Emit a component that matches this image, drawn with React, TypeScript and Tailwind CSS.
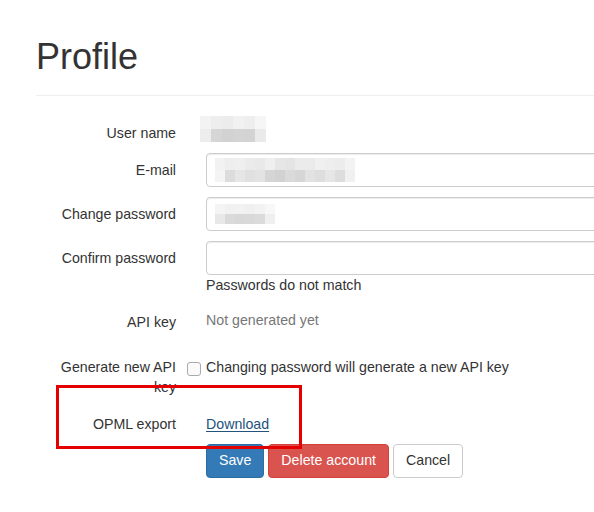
import React from 'react';

const font = { fontFamily: '"Liberation Sans", Arial, sans-serif' };

// pixelated placeholder for blurred data
const Mosaic: React.FC<{ top: string[]; bottom: string[]; cell: number; h: number }> = ({ top, bottom, cell, h }) => (
    <div className="flex flex-col">
        <div className="flex">
            {top.map((c, i) => (
                <div key={i} style={{ width: cell, height: h, background: c }} />
            ))}
        </div>
        <div className="flex">
            {bottom.map((c, i) => (
                <div key={i} style={{ width: cell, height: h, background: c }} />
            ))}
        </div>
    </div>
);

const Label: React.FC<{ children: React.ReactNode }> = ({ children }) => (
    <div className="ml-[10px] w-[130px] shrink-0 pt-[7px] text-right leading-5 text-[#333]">{children}</div>
);

const Input: React.FC<{ children?: React.ReactNode }> = ({ children }) => (
    <div className="flex h-[34px] w-[420px] shrink-0 items-center rounded-[4px] border border-[#ccc] bg-white pl-[8px] shadow-[inset_0_1px_1px_rgba(0,0,0,0.075)]">
        {children}
    </div>
);

export default function App() {
    return (
        <div className="relative h-[512px] w-[594px] overflow-hidden bg-white text-[14.2px] text-[#333]" style={font}>
            <div className="pl-[36px] pt-[37px]">
                <h1 className="border-b border-[#eee] pb-[18px] text-[36px] leading-[40px] font-normal text-[#333]">Profile</h1>

                <div className="mt-[20px] flex gap-[30px]">
                    <Label>User name</Label>
                    <div className="-ml-[6px]">
                        <Mosaic
                            cell={11}
                            h={13}
                            top={['#f3f3f3', '#eeeeee', '#ececec', '#f1f1f1', '#eeeeee', '#f6f6f6']}
                            bottom={['#ededed', '#d6d6d6', '#d2d2d2', '#d4d4d4', '#d3d3d3', '#eaeaea']}
                        />
                    </div>
                </div>

                <div className="mt-[10px] flex gap-[30px]">
                    <Label>E-mail</Label>
                    <Input>
                        <Mosaic
                            cell={10}
                            h={12}
                            top={['#f2f2f2', '#eeeeee', '#efefef', '#ebebeb', '#e9e9e9', '#efefef', '#e6e6e6', '#e4e4e4', '#ebebeb', '#eaeaea', '#f0f0f0', '#eeeeee', '#ececec', '#f3f3f3']}
                            bottom={['#f4f4f4', '#dcdcdc', '#e6e6e6', '#e0e0e0', '#e3e3e3', '#d5d5d5', '#d2d2d2', '#dadada', '#d6d6d6', '#e2e2e2', '#dedede', '#e6e6e6', '#dddddd', '#f0f0f0']}
                        />
                    </Input>
                </div>

                <div className="mt-[10px] flex gap-[30px]">
                    <Label>Change password</Label>
                    <Input>
                        <Mosaic
                            cell={10}
                            h={10}
                            top={['#f4f4f4', '#f1f1f1', '#f2f2f2', '#f0f0f0', '#f3f3f3', '#f7f7f7']}
                            bottom={['#e8e8e8', '#dadada', '#d8d8d8', '#d9d9d9', '#dbdbdb', '#efefef']}
                        />
                    </Input>
                </div>

                <div className="mt-[10px] flex gap-[30px]">
                    <Label>Confirm password</Label>
                    <div className="shrink-0">
                        <Input />
                        <div className="leading-5 text-[#333]">Passwords do not match</div>
                    </div>
                </div>

                <div className="mt-[10px] flex gap-[30px]">
                    <Label>API key</Label>
                    <div className="pt-[5px] leading-5 text-[#777]">Not generated yet</div>
                </div>

                <div className="mt-[18px] flex gap-[30px]">
                    <Label>Generate new API key</Label>
                    <div className="relative pt-[7px] leading-5">
                        <span className="absolute -left-[19px] top-[12px] h-[14px] w-[14px] rounded-[3px] border border-[#aaa] bg-[#fafafa]" />
                        Changing password will generate a new API key
                    </div>
                </div>

                <div className="mt-[10px] flex gap-[30px]">
                    <Label>OPML export</Label>
                    <div className="pt-[7px] leading-5">
                        <a href="#" className="text-[#23527c] underline underline-offset-2">Download</a>
                    </div>
                </div>

                <div className="mt-[10px] flex gap-[4px] pl-[170px]">
                    <button className="h-[34px] rounded-[4px] border border-[#2e6da4] bg-[#337ab7] px-[12px] text-white">Save</button>
                    <button className="h-[34px] rounded-[4px] border border-[#d43f3a] bg-[#d9534f] px-[12px] text-white">Delete account</button>
                    <button className="h-[34px] rounded-[4px] border border-[#ccc] bg-white px-[12px] text-[#333]">Cancel</button>
                </div>
            </div>

            <div className="absolute left-[56px] top-[385px] h-[64px] w-[246px] border-[3px] border-[#e50000]" />
        </div>
    );
}
